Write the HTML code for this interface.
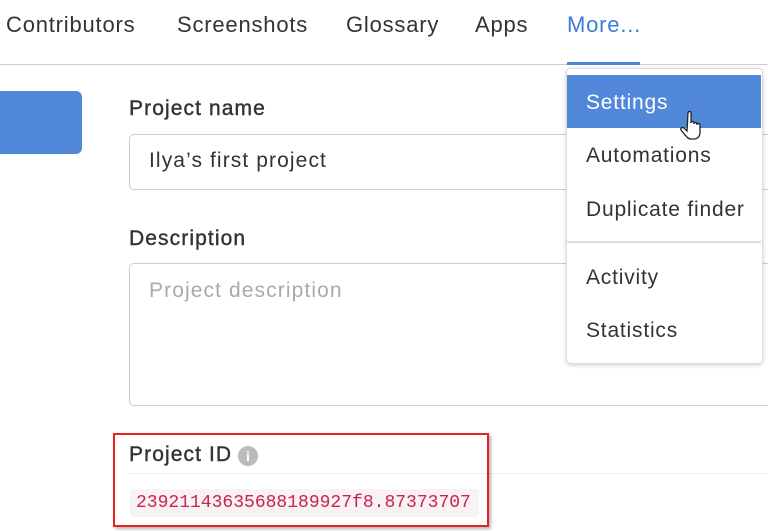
<!DOCTYPE html>
<html><head><style>
body{margin:0;width:768px;height:531px;overflow:hidden;background:#fff;font-family:"Liberation Sans",sans-serif;color:#333;position:relative}
.a{position:absolute;white-space:nowrap}
.nav{font-size:22px;letter-spacing:0.8px;top:12px;color:#333}
.lbl{font-size:21px;letter-spacing:1.1px;color:#333;left:129px;-webkit-text-stroke:0.4px #333}
.m{font-size:21px;letter-spacing:0.8px}
</style></head><body>
<div class="a nav" style="left:6px">Contributors</div>
<div class="a nav" style="left:177px">Screenshots</div>
<div class="a nav" style="left:346px">Glossary</div>
<div class="a nav" style="left:475px">Apps</div>
<div class="a nav" style="left:567px;color:#3b7ad8">More...</div>
<div class="a" style="left:0;top:64px;width:768px;height:1px;background:#ccc"></div>
<div class="a" style="left:567px;top:62px;width:73px;height:3px;background:#4a86dc"></div>
<div class="a" style="left:-10px;top:91px;width:92px;height:63px;background:#5288d9;border-radius:6px"></div>
<div class="a lbl" style="top:97px">Project name</div>
<div class="a" style="left:129px;top:134px;width:660px;height:54px;border:1px solid #ccc;border-radius:5px"></div>
<div class="a m" style="left:149px;top:149px;letter-spacing:1.1px">Ilya’s first project</div>
<div class="a lbl" style="top:227px">Description</div>
<div class="a" style="left:129px;top:263px;width:660px;height:141px;border:1px solid #ccc;border-radius:5px"></div>
<div class="a m" style="left:149px;top:279px;color:#aaa;letter-spacing:1.1px">Project description</div>
<div class="a" style="left:129px;top:473px;width:639px;height:1px;background:#eee"></div>
<div class="a lbl" style="top:443px">Project ID</div>
<div class="a" style="left:238px;top:446px;width:20px;height:20px;border-radius:50%;background:#bbb;color:#fff;font-size:14px;font-weight:bold;text-align:center;line-height:20px">i</div>
<div class="a" style="left:130px;top:489px;width:349px;height:28px;background:#f8f2f4;border-radius:4px"></div>
<div class="a" style="left:136px;top:493px;font-family:'Liberation Mono',monospace;font-size:18px;color:#c7254e">23921143635688189927f8.87373707</div>
<div class="a" style="left:113px;top:433px;width:372px;height:90px;border:2px solid #e82020;box-shadow:2px 2px 3px rgba(0,0,0,.3)"></div>
<div class="a" style="left:566px;top:68px;width:195px;height:294px;background:#fff;border:1px solid #ddd;border-radius:5px;box-shadow:0 1px 4px rgba(0,0,0,.2)"></div>
<div class="a" style="left:567px;top:75px;width:194px;height:53px;background:#5288d9"></div>
<div class="a m" style="left:586px;top:91px;color:#fff">Settings</div>
<div class="a m" style="left:586px;top:144px">Automations</div>
<div class="a m" style="left:586px;top:198px">Duplicate finder</div>
<div class="a" style="left:567px;top:241px;width:194px;height:2px;background:#ddd"></div>
<div class="a m" style="left:586px;top:266px">Activity</div>
<div class="a m" style="left:586px;top:319px">Statistics</div>
<svg class="a" style="left:680px;top:110px" width="26" height="34" viewBox="0 0 26 34"><path d="M8 3c0-2 3-2 3 0v10c0-2 3-2 3 0v1c0-2 3-2 3 0v1c0-2 3-2 3 0v7c0 4-2 7-6 7h-3c-3 0-4-2-6-4l-4-5c-1-2 1-3 3-2l3 3z" fill="#fff" stroke="#222" stroke-width="1.3"/></svg>
</body></html>
